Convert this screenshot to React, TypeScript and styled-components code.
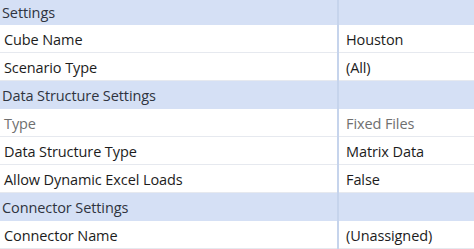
import React from "react";
import styled, { createGlobalStyle } from "styled-components";

const Global = createGlobalStyle`
  html, body { margin: 0; padding: 0; background: #ffffff; }
  body { font-family: "Open Sans", "Noto Sans", sans-serif; }
`;

const Grid = styled.div`
  width: 474px;
  height: 249px;
  overflow: hidden;
  display: flex;
  flex-direction: column;
  background: #ffffff;
`;

const Row = styled.div<{ $header?: boolean; $first?: boolean }>`
  display: grid;
  grid-template-columns: 337px 2px 1fr;
  height: ${(p) => (p.$first ? 25 : 28)}px;
  flex: none;
  background: ${(p) => (p.$header ? "#d5e0f5" : "#ffffff")};
  box-sizing: border-box;
  border-bottom: 1px solid ${(p) => (p.$header ? "#d5e0f5" : "#e6e9ef")};
`;

const Cell = styled.div<{ $header?: boolean; $muted?: boolean; $value?: boolean; $first?: boolean }>`
  display: flex;
  align-items: center;
  padding-left: ${(p) => (p.$value ? 7 : p.$header ? 2 : 4)}px;
  padding-top: ${(p) => (p.$first ? 0 : 1)}px;
  font-size: 14.5px;
  letter-spacing: -0.1px;
  color: ${(p) => (p.$muted ? "#6f6f6f" : p.$header ? "#2f3440" : "#1c1c1c")};
  white-space: nowrap;
  overflow: hidden;
`;

const Divider = styled.div`
  background: #c6d4ec;
  margin-bottom: -1px;
`;

type Item =
  | { kind: "header"; label: string }
  | { kind: "prop"; label: string; value: string; muted?: boolean };

const items: Item[] = [
  { kind: "header", label: "Settings" },
  { kind: "prop", label: "Cube Name", value: "Houston" },
  { kind: "prop", label: "Scenario Type", value: "(All)" },
  { kind: "header", label: "Data Structure Settings" },
  { kind: "prop", label: "Type", value: "Fixed Files", muted: true },
  { kind: "prop", label: "Data Structure Type", value: "Matrix Data" },
  { kind: "prop", label: "Allow Dynamic Excel Loads", value: "False" },
  { kind: "header", label: "Connector Settings" },
  { kind: "prop", label: "Connector Name", value: "(Unassigned)" },
];

export default function App() {
  return (
    <>
      <Global />
      <Grid>
        {items.map((it, i) =>
          it.kind === "header" ? (
            <Row key={i} $header $first={i === 0}>
              <Cell $header $first={i === 0}>{it.label}</Cell>
              <Divider />
              <Cell $header $value />
            </Row>
          ) : (
            <Row key={i}>
              <Cell $muted={it.muted}>{it.label}</Cell>
              <Divider />
              <Cell $value $muted={it.muted}>{it.value}</Cell>
            </Row>
          )
        )}
      </Grid>
    </>
  );
}
